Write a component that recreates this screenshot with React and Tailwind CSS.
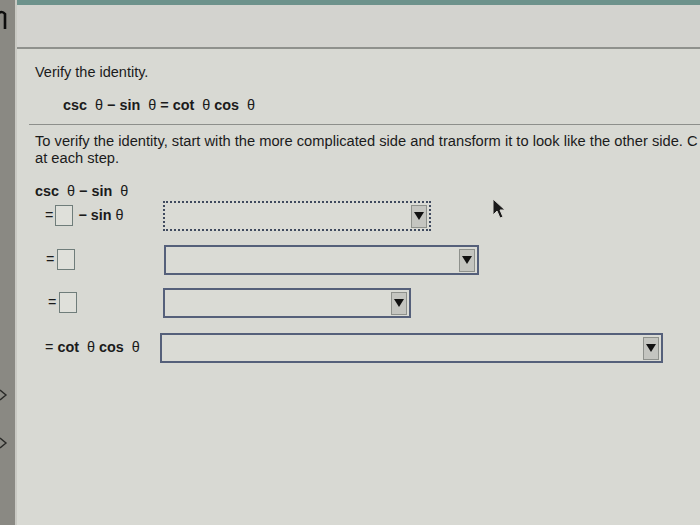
import React from "react";

const font = { fontFamily: '"Liberation Sans", Arial, sans-serif' };

function Th() {
  return <span className="font-normal">θ</span>;
}

function Box() {
  return <span className="inline-block w-[18px] h-[21px] border border-[#6f7d7a] bg-[#dfe0da]" />;
}

function Arrow() {
  return (
    <span className="flex items-center justify-center w-[16px] h-[23px] bg-[#c4c5c0] border border-[#8e918c]">
      <svg width="10" height="10" viewBox="0 0 10 10">
        <polygon points="0,1 10,1 5,9" fill="#111" />
      </svg>
    </span>
  );
}

function Dropdown({ w, focused, offset = "" }) {
  return (
    <div
      className={`${w} ${offset} h-[30px] flex items-center justify-end pr-[2px] bg-[#dadbd5] ${
        focused ? "border-2 border-dotted border-[#3f4a5e]" : "border-2 border-[#55607a]"
      }`}
    >
      <Arrow />
    </div>
  );
}

function Cursor() {
  return (
    <svg className="absolute left-[492px] top-[198px]" width="16" height="22" viewBox="0 0 16 22">
      <path d="M1 1 L1 17 L5 13 L8 20 L11 19 L8 12 L13 12 Z" fill="#1a1a1a" stroke="#d8d8d2" strokeWidth="1" />
    </svg>
  );
}

export default function App() {
  return (
    <div className="relative w-[700px] h-[525px] overflow-hidden flex bg-[#d8d9d3] text-[#1b1b1b]" style={font}>
      {/* left edge of the window behind */}
      <div className="w-[17px] shrink-0 bg-[#8a8983] flex flex-col border-r-2 border-[#c9c9c3]">
        <svg width="9" height="22" viewBox="0 0 9 22" className="mt-[9px]">
          <path d="M-3 5 Q 2 1 5 5 L 5 20" fill="none" stroke="#0d0d0d" strokeWidth="2.6" />
        </svg>
        <svg width="8" height="14" viewBox="0 0 8 14" className="mt-[357px]">
          <path d="M0 2 L6 7 L0 12" fill="none" stroke="#2a2a28" strokeWidth="1.4" />
        </svg>
        <svg width="8" height="14" viewBox="0 0 8 14" className="mt-[34px]">
          <path d="M0 2 L6 7 L0 12" fill="none" stroke="#2a2a28" strokeWidth="1.4" />
        </svg>
      </div>

      <div className="flex-1 flex flex-col">
        <div className="h-[5px] bg-[#6d928c]" />
        <div className="h-[44px] bg-[#d3d3cf] border-b-2 border-[#8f918d]" />

        <div className="pl-[18px] flex flex-col">
          <p className="mt-[15px] text-[14.5px] leading-[17px]">Verify the identity.</p>

          <p className="mt-[16px] ml-[28px] text-[14.4px] leading-[16px] font-bold whitespace-nowrap">
            csc&nbsp;&nbsp;<Th /> − sin&nbsp;&nbsp;<Th /> = cot&nbsp;&nbsp;<Th /> cos&nbsp;&nbsp;<Th />
          </p>
        </div>

        <div className="mt-[11px] ml-[12px] border-t border-[#8d8f8b]" />

        <div className="pl-[18px] flex flex-col">
          <p className="mt-[8px] text-[14.7px] leading-[17px] whitespace-nowrap">
            To verify the identity, start with the more complicated side and transform it to look like the other side. C
          </p>
          <p className="text-[14.7px] leading-[17px]">at each step.</p>

          <p className="mt-[16px] text-[14.4px] leading-[16px] font-bold whitespace-nowrap">
            csc&nbsp;&nbsp;<Th /> − sin&nbsp;&nbsp;<Th />
          </p>

          <div className="mt-[2px] flex items-center">
            <div className="w-[128px] flex items-center gap-[2px] pl-[10px] text-[14.4px] font-bold">
              <span className="font-normal">=</span>
              <Box />
              <span className="ml-[3px]">− sin <Th /></span>
            </div>
            <Dropdown w="w-[268px]" focused />
          </div>

          <div className="mt-[14px] flex items-center">
            <div className="w-[128px] flex items-center gap-[3px] pl-[11px] text-[14.4px]">
              <span>=</span>
              <Box />
            </div>
            <Dropdown w="w-[315px]" offset="ml-[1px]" />
          </div>

          <div className="mt-[13px] flex items-center">
            <div className="w-[128px] flex items-center gap-[3px] pl-[13px] text-[14.4px]">
              <span>=</span>
              <Box />
            </div>
            <Dropdown w="w-[248px]" />
          </div>

          <div className="mt-[15px] flex items-center">
            <div className="w-[125px] pl-[10px] text-[14.4px] font-bold whitespace-nowrap">
              <span className="font-normal">=</span> cot&nbsp;&nbsp;<Th /> cos&nbsp;&nbsp;<Th />
            </div>
            <Dropdown w="w-[503px]" />
          </div>
        </div>
      </div>

      <Cursor />
    </div>
  );
}
